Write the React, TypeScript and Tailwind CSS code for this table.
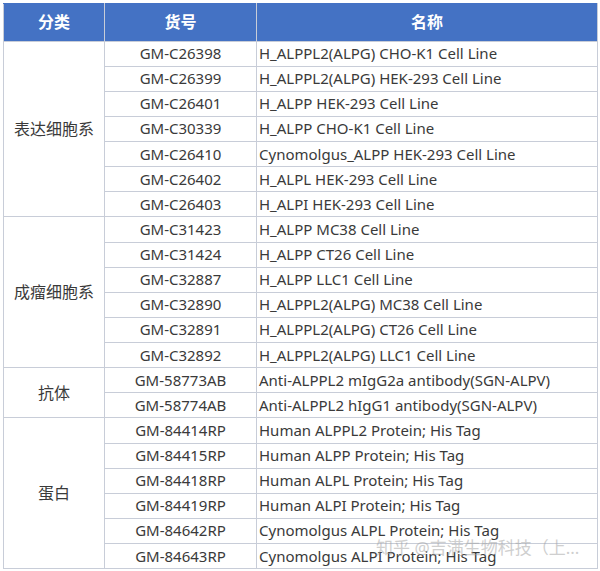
import React from "react";

type Group = { cat: string; rows: [string, string][] };

const groups: Group[] = [
  {
    cat: "表达细胞系",
    rows: [
      ["GM-C26398", "H_ALPPL2(ALPG) CHO-K1 Cell Line"],
      ["GM-C26399", "H_ALPPL2(ALPG) HEK-293 Cell Line"],
      ["GM-C26401", "H_ALPP HEK-293 Cell Line"],
      ["GM-C30339", "H_ALPP CHO-K1 Cell Line"],
      ["GM-C26410", "Cynomolgus_ALPP HEK-293 Cell Line"],
      ["GM-C26402", "H_ALPL HEK-293 Cell Line"],
      ["GM-C26403", "H_ALPI HEK-293 Cell Line"],
    ],
  },
  {
    cat: "成瘤细胞系",
    rows: [
      ["GM-C31423", "H_ALPP MC38 Cell Line"],
      ["GM-C31424", "H_ALPP CT26 Cell Line"],
      ["GM-C32887", "H_ALPP LLC1 Cell Line"],
      ["GM-C32890", "H_ALPPL2(ALPG) MC38 Cell Line"],
      ["GM-C32891", "H_ALPPL2(ALPG) CT26 Cell Line"],
      ["GM-C32892", "H_ALPPL2(ALPG) LLC1 Cell Line"],
    ],
  },
  {
    cat: "抗体",
    rows: [
      ["GM-58773AB", "Anti-ALPPL2 mIgG2a antibody(SGN-ALPV)"],
      ["GM-58774AB", "Anti-ALPPL2 hIgG1 antibody(SGN-ALPV)"],
    ],
  },
  {
    cat: "蛋白",
    rows: [
      ["GM-84414RP", "Human ALPPL2 Protein; His Tag"],
      ["GM-84415RP", "Human ALPP Protein; His Tag"],
      ["GM-84418RP", "Human ALPL Protein; His Tag"],
      ["GM-84419RP", "Human ALPI Protein; His Tag"],
      ["GM-84642RP", "Cynomolgus ALPL Protein; His Tag"],
      ["GM-84643RP", "Cynomolgus ALPI Protein; His Tag"],
    ],
  },
];

export default function App() {
  return (
    <div
      className="relative w-[600px] h-[571px] bg-white overflow-hidden"
      style={{ fontFamily: '"Noto Sans", "Noto Sans CJK SC", sans-serif' }}
    >
      <div className="pt-[3px] pl-[3px]">
        <table className="table-fixed border-collapse w-[594px] text-[15px] text-[#3a3a3a]">
          <colgroup>
            <col className="w-[101px]" />
            <col className="w-[152px]" />
            <col className="w-[341px]" />
          </colgroup>
          <thead>
            <tr className="h-[37.5px] bg-[#4472c4] text-white font-bold text-[16px]">
              <th className="border border-[#c8cdd8] border-t-[#4472c4] font-bold">分类</th>
              <th className="border border-[#c8cdd8] border-t-[#4472c4] font-bold">货号</th>
              <th className="border border-[#c8cdd8] border-t-[#4472c4] font-bold">名称</th>
            </tr>
          </thead>
          <tbody>
            {groups.map((g) =>
              g.rows.map((r, i) => (
                <tr key={r[0]} className="h-[25.13px]">
                  {i === 0 && (
                    <td
                      rowSpan={g.rows.length}
                      className="border border-[#c8cdd8] text-center text-[16px] p-0"
                    >
                      {g.cat}
                    </td>
                  )}
                  <td className="border border-[#c8cdd8] text-center p-0 leading-none">
                    {r[0]}
                  </td>
                  <td className="border border-[#c8cdd8] py-0 pr-0 pl-[2px] leading-none whitespace-nowrap">
                    {r[1]}
                  </td>
                </tr>
              ))
            )}
          </tbody>
        </table>
      </div>
      <div className="absolute left-[376px] top-[535px] text-[17px] text-[#a0a0a0] opacity-50 whitespace-nowrap">
        知乎 @吉满生物科技（上...
      </div>
    </div>
  );
}
